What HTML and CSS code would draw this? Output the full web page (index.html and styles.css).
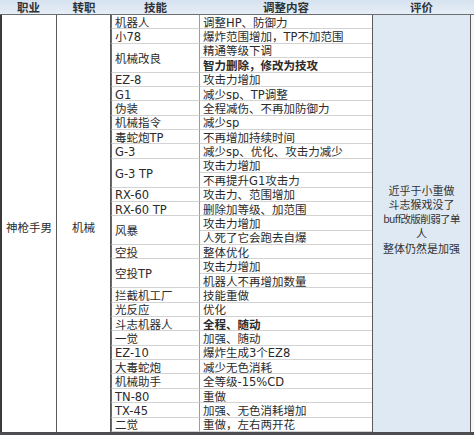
FILE: index.html
```html
<!DOCTYPE html>
<html lang="zh-CN">
<head>
<meta charset="utf-8">
<title>神枪手男 机械 调整</title>
<link rel="stylesheet" href="styles.css">
</head>
<body>
<div class="sheet">
  <div class="th">职业</div>
  <div class="th">转职</div>
  <div class="th">技能</div>
  <div class="th">调整内容</div>
  <div class="th">评价</div>
  <div class="th"></div>

  <div class="job">神枪手男</div>
  <div class="sub">机械</div>
  <div class="eval">
    <span class="line">近乎于小重做</span>
    <span class="line">斗志猴戏没了</span>
    <span class="line tight">buff改版削弱了单</span>
    <span class="line">人</span>
    <span class="line">整体仍然是加强</span>
  </div>
  <div class="gap"></div>

  <div class="sk">机器人</div><div class="ad">调整HP、防御力</div>
  <div class="sk">小78</div><div class="ad">爆炸范围增加，TP不加范围</div>
  <div class="sk span2">机械改良</div><div class="ad">精通等级下调</div><div class="ad bold">智力删除，修改为技攻</div>
  <div class="sk">EZ-8</div><div class="ad">攻击力增加</div>
  <div class="sk">G1</div><div class="ad">减少sp、TP调整</div>
  <div class="sk">伪装</div><div class="ad">全程减伤、不再加防御力</div>
  <div class="sk">机械指令</div><div class="ad">减少sp</div>
  <div class="sk">毒蛇炮TP</div><div class="ad">不再增加持续时间</div>
  <div class="sk">G-3</div><div class="ad">减少sp、优化、攻击力减少</div>
  <div class="sk span2">G-3 TP</div><div class="ad">攻击力增加</div><div class="ad">不再提升G1攻击力</div>
  <div class="sk">RX-60</div><div class="ad">攻击力、范围增加</div>
  <div class="sk">RX-60 TP</div><div class="ad">删除加等级、加范围</div>
  <div class="sk span2">风暴</div><div class="ad">攻击力增加</div><div class="ad">人死了它会跑去自爆</div>
  <div class="sk">空投</div><div class="ad">整体优化</div>
  <div class="sk span2">空投TP</div><div class="ad">攻击力增加</div><div class="ad">机器人不再增加数量</div>
  <div class="sk">拦截机工厂</div><div class="ad">技能重做</div>
  <div class="sk">光反应</div><div class="ad">优化</div>
  <div class="sk">斗志机器人</div><div class="ad bold">全程、随动</div>
  <div class="sk">一觉</div><div class="ad">加强、随动</div>
  <div class="sk">EZ-10</div><div class="ad">爆炸生成3个EZ8</div>
  <div class="sk">大毒蛇炮</div><div class="ad">减少无色消耗</div>
  <div class="sk">机械助手</div><div class="ad">全等级-15%CD</div>
  <div class="sk">TN-80</div><div class="ad">重做</div>
  <div class="sk">TX-45</div><div class="ad">加强、无色消耗增加</div>
  <div class="sk">二觉</div><div class="ad">重做，左右两开花</div>
</div>
<div class="bottom-bar"></div>
</body>
</html>
```

FILE: styles.css
```css
html, body {
  margin: 0;
  padding: 0;
  background: #ffffff;
}

body {
  width: 474px;
  height: 435px;
  overflow: hidden;
  font-family: "DejaVu Sans", "Noto Sans CJK SC", sans-serif;
  font-size: 11.5px;
  color: #2b2b2b;
}

.sheet {
  display: grid;
  grid-template-columns: 57px 54px 89px 172px 99px 3px;
  grid-template-rows: 15px repeat(29, 1fr);
  height: 432px;
  box-sizing: border-box;
}

.th {
  grid-row: 1;
  background: linear-gradient(#d5e2ef, #e7eef6);
  border-bottom: 1px solid #6b6f74;
  box-sizing: border-box;
  display: flex;
  justify-content: center;
  align-items: flex-end;
  font-family: "Noto Sans CJK SC", sans-serif;
  font-weight: bold;
  font-size: 11.5px;
  line-height: 13px;
  color: #2f3338;
}

.job,
.sub,
.eval,
.gap {
  grid-row: 2 / span 29;
  display: flex;
  justify-content: center;
  align-items: center;
  box-sizing: border-box;
  font-family: "Noto Sans CJK SC", sans-serif;
}

.job {
  grid-column: 1;
  border-left: 2px solid #3a3a3a;
  border-right: 1px solid #5a5a5a;
  padding-top: 6px;
}

.sub {
  grid-column: 2;
  border-right: 1px solid #5a5a5a;
  padding-top: 6px;
}

.eval {
  grid-column: 5;
  flex-direction: column;
  background: #dee9f4;
  border-left: 1px solid #5a5a5a;
  border-right: 1px solid #5a5a5a;
  font-size: 11px;
  line-height: 14.6px;
  color: #333;
  padding-bottom: 9px;
}

.line {
  display: block;
  white-space: nowrap;
}

.tight {
  font-size: 10.5px;
  letter-spacing: -0.6px;
}

.gap {
  grid-column: 6;
  background: #f4f6f8;
}

.sk,
.ad {
  box-sizing: border-box;
  display: flex;
  align-items: center;
  padding-top: 2px;
  border-bottom: 1px solid #d3d3d3;
  white-space: nowrap;
  overflow: hidden;
  line-height: 12px;
}

.sk {
  grid-column: 3;
  padding-left: 3px;
  border-right: 1px solid #9c9c9c;
  border-left: 1px solid #6a6a6a;
}

.ad {
  grid-column: 4;
  padding-left: 3px;
}

.span2 {
  grid-row-end: span 2;
}

.bold {
  font-weight: bold;
}

.bottom-bar {
  height: 3px;
  background: #4b4d50;
}
```
